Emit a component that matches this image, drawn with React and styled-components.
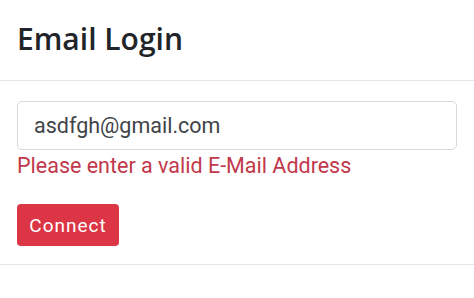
import React from "react";
import styled, { createGlobalStyle } from "styled-components";

const Global = createGlobalStyle`
  html, body { margin: 0; padding: 0; background: #fff; }
  * { box-sizing: border-box; }
`;

const Modal = styled.div`
  width: 474px;
  height: 298px;
  background: #fff;
  font-family: Roboto, "Liberation Sans", sans-serif;
`;

const Header = styled.div`
  height: 81px;
  padding: 0 17px;
  display: flex;
  align-items: center;
  border-bottom: 1px solid #e3e5e8;
`;

const Title = styled.h5`
  margin: 0;
  font-family: "Open Sans", "Noto Sans", sans-serif;
  font-weight: 600;
  font-size: 30px;
  color: #212529;
  line-height: 1.2;
  padding-bottom: 3px;
`;

const Body = styled.div`
  height: 184px;
  padding: 20px 17px 0;
  display: flex;
  flex-direction: column;
  border-bottom: 1px solid #e3e5e8;
`;

const Input = styled.input`
  width: 440px;
  height: 49px;
  padding: 0 16px;
  font-family: Roboto, sans-serif;
  font-size: 21.5px;
  color: #3f4448;
  border: 1.5px solid #d6d9dc;
  border-radius: 5px;
  outline: none;
  background: #fff;
`;

const ErrorText = styled.div`
  margin-top: 2px;
  font-size: 21.5px;
  line-height: 28px;
  color: #c2384b;
`;

const Button = styled.button`
  margin-top: 24px;
  align-self: flex-start;
  width: 102px;
  height: 42px;
  background: #dc3545;
  color: #fff;
  border: none;
  border-radius: 4px;
  font-family: Roboto, sans-serif;
  font-size: 19px;
  letter-spacing: 1px;
  padding: 0;
`;

export default function App() {
  return (
    <>
      <Global />
      <Modal>
        <Header>
          <Title>Email Login</Title>
        </Header>
        <Body>
          <Input defaultValue="asdfgh@gmail.com" />
          <ErrorText>Please enter a valid E-Mail Address</ErrorText>
          <Button>Connect</Button>
        </Body>
      </Modal>
    </>
  );
}
